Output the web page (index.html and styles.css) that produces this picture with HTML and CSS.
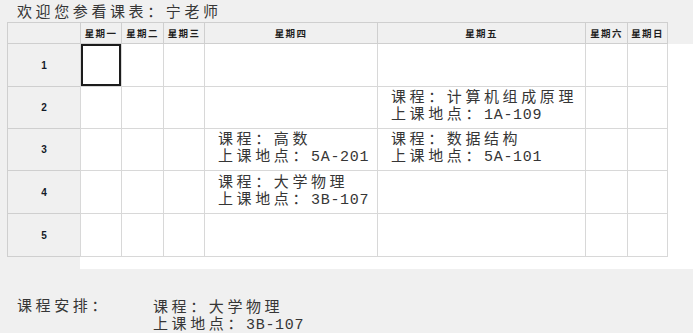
FILE: index.html
```html
<!DOCTYPE html>
<html lang="zh">
<head>
<meta charset="utf-8">
<title>课表</title>
<link rel="stylesheet" href="styles.css">
</head>
<body>
<div class="title">欢迎您参看课表：宁老师</div>
<div class="table">
  <div class="corner"></div>
  <div class="hheader">
    <div class="hcell">星期一</div>
    <div class="hcell">星期二</div>
    <div class="hcell">星期三</div>
    <div class="hcell">星期四</div>
    <div class="hcell">星期五</div>
    <div class="hcell">星期六</div>
    <div class="hcell">星期日</div>
  </div>
  <div class="vheader">
    <div class="vcell r43">1</div>
    <div class="vcell r42">2</div>
    <div class="vcell r42">3</div>
    <div class="vcell r43">4</div>
    <div class="vcell r43">5</div>
  </div>
  <div class="viewport">
    <div class="grid">
      <div class="cell current"></div><div class="cell"></div><div class="cell"></div><div class="cell"></div><div class="cell"></div><div class="cell"></div><div class="cell"></div>
      <div class="cell"></div><div class="cell"></div><div class="cell"></div><div class="cell"></div>
      <div class="cell text"><div>课程：计算机组成原理</div><div>上课地点：<span class="num">1A-109</span></div></div>
      <div class="cell"></div><div class="cell"></div>
      <div class="cell"></div><div class="cell"></div><div class="cell"></div>
      <div class="cell text"><div>课程：高数</div><div>上课地点：<span class="num">5A-201</span></div></div>
      <div class="cell text"><div>课程：数据结构</div><div>上课地点：<span class="num">5A-101</span></div></div>
      <div class="cell"></div><div class="cell"></div>
      <div class="cell"></div><div class="cell"></div><div class="cell"></div>
      <div class="cell text"><div>课程：大学物理</div><div>上课地点：<span class="num">3B-107</span></div></div>
      <div class="cell"></div><div class="cell"></div><div class="cell"></div>
      <div class="cell"></div><div class="cell"></div><div class="cell"></div><div class="cell"></div><div class="cell"></div><div class="cell"></div><div class="cell"></div>
    </div>
  </div>
</div>
<div class="detail">
  <div class="label">课程安排：</div>
  <div class="info"><div>课程：大学物理</div><div>上课地点：<span class="num">3B-107</span></div></div>
</div>
</body>
</html>
```
FILE: styles.css
```css
html, body {
  margin: 0;
  padding: 0;
  background: #f0f0f0;
  width: 693px;
  height: 333px;
  overflow: hidden;
  font-family: "Noto Sans CJK SC", "Noto Sans", sans-serif;
  color: #363636;
}
.title {
  height: 22px;
  line-height: 21px;
  padding-left: 17px;
  font-size: 15px;
  letter-spacing: 3.6px;
  box-sizing: border-box;
}
.table {
  margin-left: 7px;
  display: grid;
  grid-template-columns: 73px 613px;
  grid-template-rows: 22px 225px;
}
.corner {
  background: #f0f0f0;
  border: 1px solid #cfcfcf;
  border-right: none;
}
.hheader {
  display: grid;
  grid-template-columns: 41px 42px 41px 173px 208px 42px 41px;
  width: 588px;
}
.hcell {
  border-top: 1px solid #cfcfcf;
  border-bottom: 1px solid #cfcfcf;
  border-left: 1px solid #cfcfcf;
  background: #f0f0f0;
  display: flex;
  align-items: center;
  justify-content: center;
  font-size: 9.5px;
  font-weight: 700;
  letter-spacing: 1.3px;
  color: #1f1f1f;
}
.hcell:last-child {
  border-right: 1px solid #cfcfcf;
}
.vheader {
  display: flex;
  flex-direction: column;
}
.vcell {
  border-left: 1px solid #cfcfcf;
  border-bottom: 1px solid #cfcfcf;
  background: #f0f0f0;
  display: flex;
  align-items: center;
  justify-content: center;
  font-family: "Liberation Sans", sans-serif;
  font-size: 10px;
  font-weight: 700;
  color: #141a28;
  box-sizing: border-box;
}
.r43 { height: 43px; }
.r42 { height: 42px; }
.viewport {
  background: #ffffff;
}
.grid {
  display: grid;
  grid-template-columns: 41px 42px 41px 173px 208px 42px 41px;
  grid-template-rows: 43px 42px 42px 43px 43px;
  width: 588px;
}
.cell {
  border-left: 1px solid #d8d8d8;
  border-bottom: 1px solid #d8d8d8;
}
.cell:nth-child(7n) {
  border-right: 1px solid #d8d8d8;
}
.current {
  box-shadow: inset 0 0 0 2px #1c1c1c;
}
.text {
  display: flex;
  flex-direction: column;
  justify-content: center;
  padding: 0 0 4px 13px;
  font-size: 15px;
  line-height: 17px;
  letter-spacing: 3.6px;
  white-space: nowrap;
}
.num {
  font-family: "Liberation Mono", monospace;
  letter-spacing: 0.7px;
}
.detail {
  display: flex;
  margin-top: 28px;
  padding-left: 17px;
  font-size: 15px;
  line-height: 16px;
  letter-spacing: 3.6px;
}
.info {
  line-height: 17px;
}
.label {
  width: 136px;
}
```
